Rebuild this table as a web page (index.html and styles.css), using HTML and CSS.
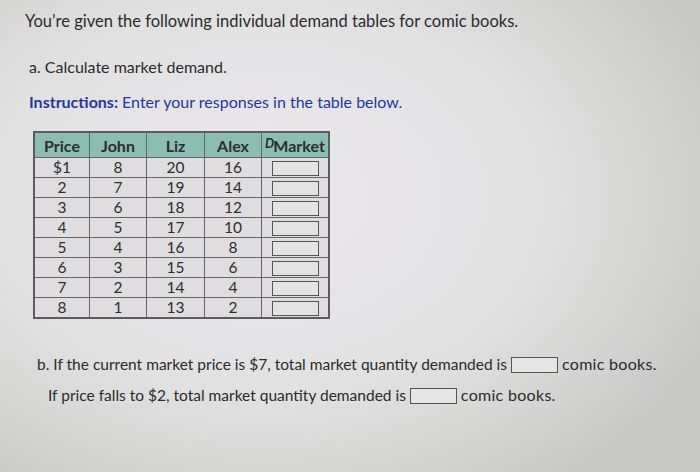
FILE: index.html
```html
<!DOCTYPE html>
<html>
<head>
<meta charset="utf-8">
<link rel="stylesheet" href="styles.css">
</head>
<body>
<div class="page">
  <p class="intro">You’re given the following individual demand tables for comic books.</p>
  <p class="part-a">a. Calculate market demand.</p>
  <p class="instr"><b>Instructions:</b> Enter your responses in the table below.</p>
  <table class="demand">
    <thead>
      <tr><th class="c1">Price</th><th class="c2">John</th><th class="c3">Liz</th><th class="c4">Alex</th><th class="c5"><span class="sup">D</span>Market</th></tr>
    </thead>
    <tbody>
      <tr><td>$1</td><td>8</td><td>20</td><td>16</td><td><span class="box"></span></td></tr>
      <tr><td>2</td><td>7</td><td>19</td><td>14</td><td><span class="box"></span></td></tr>
      <tr><td>3</td><td>6</td><td>18</td><td>12</td><td><span class="box"></span></td></tr>
      <tr><td>4</td><td>5</td><td>17</td><td>10</td><td><span class="box"></span></td></tr>
      <tr><td>5</td><td>4</td><td>16</td><td>8</td><td><span class="box"></span></td></tr>
      <tr><td>6</td><td>3</td><td>15</td><td>6</td><td><span class="box"></span></td></tr>
      <tr><td>7</td><td>2</td><td>14</td><td>4</td><td><span class="box"></span></td></tr>
      <tr><td>8</td><td>1</td><td>13</td><td>2</td><td><span class="box"></span></td></tr>
    </tbody>
  </table>
  <p class="part-b1">b. If the current market price is $7, total market quantity demanded is <span class="ibox"></span> <span class="tail">comic books.</span></p>
  <p class="part-b2">If price falls to $2, total market quantity demanded is <span class="ibox"></span> <span class="tail">comic books.</span></p>
</div>
</body>
</html>
```
FILE: styles.css
```css
html, body {
  margin: 0;
  padding: 0;
}
body {
  width: 700px;
  height: 472px;
  overflow: hidden;
  background: radial-gradient(ellipse 70% 75% at 38% 42%, #eae8eb 0%, #e2e1e2 55%, #d1d2d0 85%, #c7c8c5 100%);
  font-family: Lato, "Open Sans", sans-serif;
  color: #2b2b2b;
}
.page {
  padding: 10px 0 0 25px;
}
p {
  margin: 0;
}
.intro {
  font-size: 16.5px;
  line-height: 22px;
}
.part-a {
  margin: 24px 0 0 4px;
  font-size: 16px;
  line-height: 22px;
}
.instr {
  margin: 13px 0 0 4px;
  font-size: 16px;
  line-height: 22px;
  color: #24389c;
}
.instr b {
  font-weight: 700;
}
.demand {
  margin: 18px 0 0 8px;
  border-collapse: collapse;
  border: 2px solid #5c5c5c;
  font-size: 15.5px;
  color: #2e2e2e;
}
.demand th, .demand td {
  border: 1.5px solid #666;
  padding: 0;
  text-align: center;
}
.demand th {
  background: #8cbdb3;
  height: 24px;
  font-weight: 700;
  font-size: 16px;
}
.demand td {
  height: 19px;
  line-height: 19px;
  background: #dfdddf;
}
.c1 { width: 54px; }
.c2 { width: 56px; }
.c3 { width: 57px; }
.c4 { width: 56px; }
.c5 { width: 66px; }
.sup {
  font-style: italic;
  font-size: 13px;
  vertical-align: 4px;
  margin-right: -1px;
}
.box {
  display: block;
  width: 45px;
  height: 13px;
  margin: 0 auto;
  border: 1px solid #555;
  background: #e4e3e4;
  position: relative;
  top: 1px;
}
.part-b1 {
  margin: 35px 0 0 12px;
  font-size: 15.5px;
  line-height: 20px;
}
.part-b2 {
  margin: 11px 0 0 23px;
  font-size: 15.5px;
  line-height: 20px;
}
.tail {
  font-size: 16px;
  letter-spacing: 0.3px;
}
.ibox {
  display: inline-block;
  width: 45px;
  height: 14px;
  border: 1px solid #555;
  vertical-align: -3px;
  background: #e6e5e6;
}
```
